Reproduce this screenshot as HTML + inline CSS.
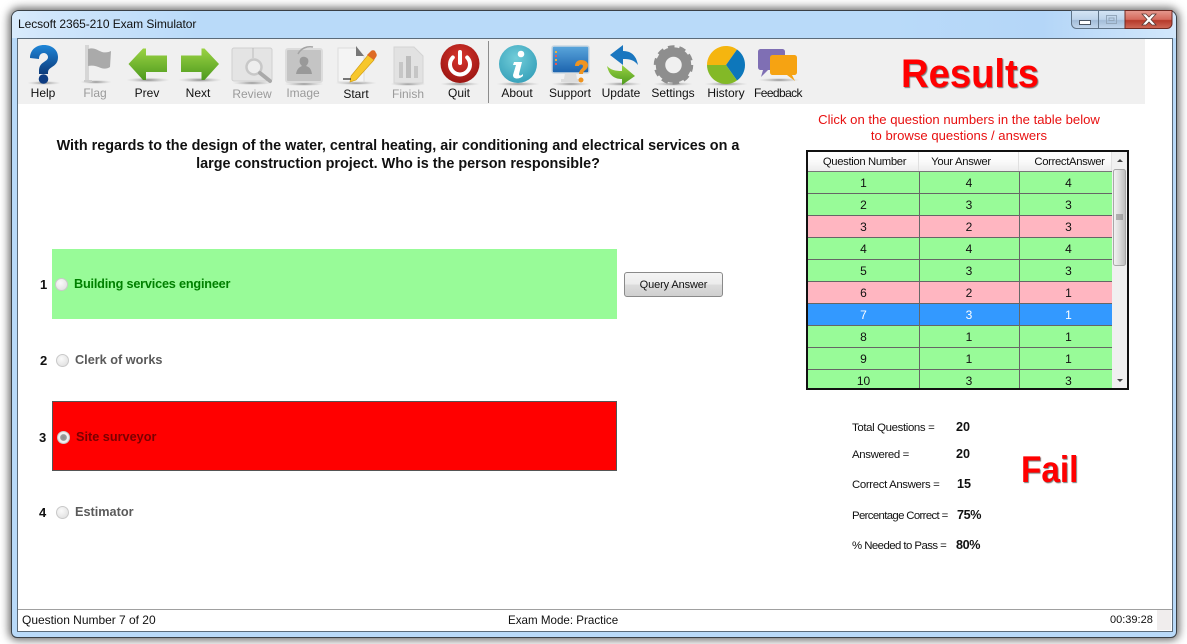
<!DOCTYPE html>
<html><head><meta charset="utf-8"><title>Lecsoft 2365-210 Exam Simulator</title>
<style>
html,body{margin:0;padding:0;background:#fff}
body{width:1187px;height:644px;position:relative;overflow:hidden;font-family:"Liberation Sans",sans-serif;color:#111;font-size:12px}
.a{position:absolute;white-space:nowrap}
#win{position:absolute;left:11px;top:10px;width:1166px;height:628px;border-radius:8px 8px 6px 6px;background:#b9daf9;box-shadow:0 0 9px 2px rgba(0,0,0,.62);border:1px solid #3a4046;box-sizing:border-box}
#glow{position:absolute;left:12px;top:11px;width:1164px;height:27px;border-radius:7px 7px 0 0;background:linear-gradient(90deg,#d9ebfc 0,#cfe5fb 40px,#b9daf9 190px,#b9daf9 880px,#b4d6f8 1030px,#d2e7fb 1164px)}
#client{position:absolute;left:17px;top:38px;width:1156px;height:594px;background:#fff;border:1px solid #5b6b7a;box-sizing:border-box}
#tb{position:absolute;left:18px;top:39px;width:1127px;height:65px;background:#f0f0f0}
.l{position:absolute;top:86px;width:70px;text-align:center;font-size:12px;color:#111}
.d{color:#9a9a9a}
.q{position:absolute;left:40px;width:716px;text-align:center;font-weight:bold;font-size:14.4px;color:#111;white-space:nowrap}
.opt{position:absolute;left:52px;width:565px;height:70px;box-sizing:border-box}
.n{position:absolute;font-weight:bold;font-size:13px;color:#111}
.t{position:absolute;font-weight:bold;font-size:12.7px;white-space:nowrap;line-height:15px}
.r{position:absolute;width:11px;height:11px;border-radius:50%;border:1px solid #c9c9c9;background:radial-gradient(circle at 40% 35%,#fafafa,#dcdcdc);box-sizing:content-box}
#btn{position:absolute;left:624px;top:272px;width:99px;height:25px;box-sizing:border-box;border:1px solid #8a8a8a;border-radius:3px;background:linear-gradient(#f4f4f4 0,#ececec 48%,#dcdcdc 52%,#cfcfcf 100%);text-align:center;line-height:24px;font-size:11px;letter-spacing:-.12px}
#grid{position:absolute;left:806px;top:150px;width:323px;height:240px;box-sizing:border-box;border:2px solid #111;background:#f0f0f0;overflow:hidden}
.hc{position:absolute;top:0;height:19px;line-height:20px;text-align:center;font-size:11.3px;letter-spacing:-.25px;background:linear-gradient(#fff 0,#fafafa 50%,#ececec 100%);border-right:1px solid #e0e0e0;box-sizing:border-box}
.row{position:absolute;left:0;width:304px;height:22px;border-bottom:1px solid #666;box-sizing:border-box;border-top:0}
.row span{position:absolute;top:4px;text-align:center;font-size:12px}
.row i{position:absolute;top:0;bottom:-1px;width:1px;background:#666}
.g{background:#98fb98}.p{background:#ffb6c1}.b{background:#3399ff;color:#fff}
.sl{position:absolute;left:852px;font-size:11.4px;letter-spacing:-.35px;white-space:nowrap}
.sv{position:absolute;font-size:12.6px;font-weight:bold;white-space:nowrap}
</style></head><body>
<div id="win"></div><div id="glow"></div>
<div class="a" style="left:18px;top:17px;font-size:12px;letter-spacing:-.08px;color:#111">Lecsoft 2365-210 Exam Simulator</div>

<svg class="a" style="left:1070px;top:10px" width="104" height="20" viewBox="0 0 104 20">
<defs>
<linearGradient id="wb" x1="0" y1="0" x2="0" y2="1"><stop offset="0" stop-color="#d4e5f5"/><stop offset=".5" stop-color="#bcd3ea"/><stop offset=".55" stop-color="#a3bdd8"/><stop offset="1" stop-color="#c3d8ee"/></linearGradient>
<linearGradient id="wr" x1="0" y1="0" x2="0" y2="1"><stop offset="0" stop-color="#e59a8f"/><stop offset=".5" stop-color="#d56a5c"/><stop offset=".55" stop-color="#b63a2a"/><stop offset="1" stop-color="#cf6a58"/></linearGradient>
</defs>
<path d="M1.5 0.5H55V18.5H6.5a5 5 0 0 1-5-5z" fill="url(#wb)" stroke="#5f7488"/>
<path d="M55 0.5H102V13.500a5 5 0 0 1-5 5H55z" fill="url(#wr)" stroke="#6e2a22"/>
<path d="M28.500 1V18" stroke="#5f7488"/>
<rect x="9.500" y="10.500" width="11" height="4" fill="#fff" stroke="#4a5563"/>
<rect x="36.500" y="5.500" width="10" height="8" fill="none" stroke="#93a7bb"/><rect x="39" y="8" width="5" height="2.500" fill="none" stroke="#93a7bb"/>
<path d="M72 4l4 0 3 3 3-3 4 0-5 5.500 5 5.500h-4l-3-3-3 3h-4l5-5.500z" fill="#fff" stroke="#5a3a36" stroke-width=".8"/>
</svg>

<div id="client"></div>
<div id="tb"></div>
<div class="a" style="left:488px;top:41px;width:1px;height:62px;background:#8c8c8c"></div>

<svg class="a" style="left:0;top:0" width="830" height="104" viewBox="0 0 830 104">
<defs>
<radialGradient id="sh"><stop offset="0" stop-color="#8a8a8a"/><stop offset="1" stop-color="#bbb" stop-opacity="0"/></radialGradient>
<linearGradient id="gr" x1="0" y1="0" x2="0" y2="1"><stop offset="0" stop-color="#9ad243"/><stop offset="1" stop-color="#4d9a1e"/></linearGradient>
<linearGradient id="bq" x1="0" y1="0" x2="0" y2="1"><stop offset="0" stop-color="#1f86d8"/><stop offset="1" stop-color="#0b3a7a"/></linearGradient>
<radialGradient id="rq" cx=".5" cy=".35" r=".7"><stop offset="0" stop-color="#d9352d"/><stop offset="1" stop-color="#971310"/></radialGradient>
<radialGradient id="tq" cx=".45" cy=".35" r=".7"><stop offset="0" stop-color="#72cdd9"/><stop offset="1" stop-color="#349fb9"/></radialGradient>
<linearGradient id="mon" x1="0" y1="0" x2="0" y2="1"><stop offset="0" stop-color="#5aa6dc"/><stop offset="1" stop-color="#1b62ad"/></linearGradient>
</defs>
<g fill="url(#sh)">
<ellipse cx="44" cy="83" rx="17" ry="2"/><ellipse cx="96" cy="82" rx="16" ry="2"/><ellipse cx="148" cy="80" rx="22" ry="2.500"/><ellipse cx="200" cy="80" rx="22" ry="2.500"/>
<ellipse cx="252" cy="83" rx="20" ry="2"/><ellipse cx="304" cy="84" rx="20" ry="2"/><ellipse cx="356" cy="83" rx="21" ry="2"/><ellipse cx="408" cy="84" rx="18" ry="2"/>
<ellipse cx="460" cy="84" rx="20" ry="2"/><ellipse cx="518" cy="84" rx="22" ry="2"/><ellipse cx="571" cy="84" rx="20" ry="2"/><ellipse cx="622" cy="84" rx="20" ry="2"/><ellipse cx="673" cy="84" rx="20" ry="2"/><ellipse cx="726" cy="84" rx="22" ry="2"/><ellipse cx="779" cy="80" rx="21" ry="2"/>
</g>
<!-- Help -->
<path d="M30 58c0-8 6-13 14-13 8 0 14 5 14 12 0 6-3 8-6 10-3 2-4 3-4 6v1h-9v-3c0-5 2-7 5-9 3-2 4-3 4-5 0-2-2-4-4-4-3 0-5 2-5 6z" fill="url(#bq)"/>
<circle cx="43.500" cy="79" r="4.800" fill="#0d3c82"/>
<!-- Flag -->
<rect x="85" y="45" width="4" height="36" fill="#d6d6d6"/><rect x="84" y="80" width="8" height="2" fill="#ccc"/>
<path d="M88 49c6-2 9 1 14 3 4 1 7 0 9-1l-1 16c-3 2-6 2-9 1-5-2-8-3-13-2z" fill="#aaa"/>
<!-- Prev / Next -->
<path d="M128.500 64L143 48.500h3V55.500h21V72h-21v8h-3z" fill="url(#gr)"/>
<path d="M219 64L204.500 48.500h-3V55.500H181V72h20.500v8h3z" fill="url(#gr)"/>
<!-- Review -->
<rect x="232" y="48" width="40" height="33" rx="2" fill="#e4e4e4" stroke="#cfcfcf"/><path d="M253 48v10" stroke="#bbb"/>
<circle cx="254" cy="67" r="7.500" fill="#eee" stroke="#c8c8c8" stroke-width="2.500"/><path d="M260 73l10 8" stroke="#aaa" stroke-width="4" stroke-linecap="round"/>
<!-- Image -->
<rect x="286" y="49" width="36" height="33" rx="2" fill="#c4c4c4" stroke="#dcdcdc" stroke-width="2"/>
<path d="M296 74c1-6 4-7 6-8-2-2-3-4-2-7 1-3 6-3 8 0 1 3 0 5-2 7 3 1 5 2 6 8z" fill="#999"/>
<path d="M298 54c3-6 9-8 15-7" fill="none" stroke="#a4a4a4" stroke-width="1.500"/>
<!-- Start -->
<path d="M338 48h18l8 8v26h-26z" fill="#f4f4f4" stroke="#ddd"/><path d="M356 46l8 10h-8z" fill="#777"/>
<path d="M351 76l17-21 6 5-18 20-6 2z" fill="#f7c72c" stroke="#cf9a14" stroke-width=".6"/><path d="M367 55l4-4c1-1 3-1 4 0l1 2c1 1 1 3 0 4l-2 3z" fill="#de6a25"/><path d="M343 79h8" stroke="#333" stroke-width="1.300"/>
<!-- Finish -->
<path d="M394 47h20l9 9v27h-29z" fill="#e2e2e2" stroke="#d4d4d4"/><rect x="399" y="62" width="4" height="16" fill="#c6c6c6"/><rect x="406" y="56" width="5" height="22" fill="#bdbdbd"/><rect x="414" y="66" width="4" height="12" fill="#c6c6c6"/>
<!-- Quit -->
<circle cx="460" cy="63.500" r="19.500" fill="url(#rq)"/>
<path d="M452.800 57.500a10 10 0 1 0 14.400 0" fill="none" stroke="#fff" stroke-width="4" stroke-linecap="round"/><path d="M460 52v11" stroke="#fff" stroke-width="4" stroke-linecap="round"/>
<!-- About -->
<circle cx="518" cy="64" r="19" fill="url(#tq)"/>
<circle cx="521" cy="54" r="3.300" fill="#fff"/><path d="M514 62h8l-3 12c0 2 2 2 4 0v2c-3 3-10 4-10-1l3-10h-3z" fill="#fff"/>
<!-- Support -->
<rect x="552" y="46" width="37" height="27" rx="2" fill="url(#mon)" stroke="#c9d7e2" stroke-width="1.500"/>
<g fill="#e8b340"><rect x="555" y="51" width="2" height="2"/><rect x="555" y="55" width="2" height="2" fill="#e55"/><rect x="555" y="59" width="2" height="2"/><rect x="555" y="63" width="2" height="2" fill="#e55"/></g>
<path d="M565 73h11l1 6h3v3h-19v-3h3z" fill="#dcdcdc"/>
<path d="M575 66c0-4 3-6 6-6 4 0 7 2 7 5 0 5-5 5-5 9h-4c0-5 4-5 4-8 0-2-4-2-4 0z" fill="#f0941f"/><circle cx="581" cy="80" r="2.500" fill="#f0941f"/>
<!-- Update -->
<path d="M610 55l13-10v6c8 0 13 4 15 14-4-5-8-6-15-6v6z" fill="#1a76bf"/>
<path d="M607 66c4 4 8 5 15 5v-6l13 11-13 9v-6c-8 0-13-4-15-13z" fill="url(#gr)"/>
<!-- Settings -->
<circle cx="673.500" cy="65" r="13" fill="none" stroke="#8e8e8e" stroke-width="9.500"/>
<circle cx="673.500" cy="65" r="17.500" fill="none" stroke="#8e8e8e" stroke-width="4.500" stroke-dasharray="6.300 4.700"/>
<!-- History -->
<path d="M726 65L707 65A19 19 0 0 1 737 49.500z" fill="#f5b50f"/>
<path d="M726 65L737 49.500A19 19 0 0 1 737 80.500z" fill="#0d77bb"/>
<path d="M726 65L737 80.500A19 19 0 0 1 707 65z" fill="#83b927"/>
<!-- Feedback -->
<path d="M761 49h21c2 0 3 1 3 3v15c0 2-1 3-3 3h-14l-7 7 2-7h-2c-2 0-3-1-3-3V52c0-2 1-3 3-3z" fill="#7f6fb4"/>
<path d="M773 55h21c2 0 3 1 3 3v14c0 2-1 3-3 3h-2l3 6-8-6h-14c-2 0-3-1-3-3V58c0-2 1-3 3-3z" fill="#f6a312"/>
</svg>

<div class="l" style="left:8px">Help</div><div class="l d" style="left:60px">Flag</div><div class="l" style="left:112px">Prev</div><div class="l" style="left:163px">Next</div>
<div class="l d" style="left:217px;top:87px">Review</div><div class="l d" style="left:268px">Image</div><div class="l" style="left:321px;top:87px">Start</div><div class="l d" style="left:373px;top:87px">Finish</div>
<div class="l" style="left:424px">Quit</div><div class="l" style="left:482px">About</div><div class="l" style="left:535px">Support</div><div class="l" style="left:586px">Update</div><div class="l" style="left:638px">Settings</div><div class="l" style="left:691px">History</div><div class="l" style="left:743px;letter-spacing:-.6px">Feedback</div>

<div class="a" style="left:901px;top:52px;font-size:40px;font-weight:bold;color:#f00;text-shadow:1px 1px 1px #777;transform:scaleX(.955);transform-origin:0 0">Results</div>

<div class="a" style="left:760px;width:398px;top:112px;text-align:center;font-size:13.1px;color:#e81010">Click on the question numbers in the table below</div>
<div class="a" style="left:760px;width:398px;top:128px;text-align:center;font-size:13.1px;color:#e81010">to browse questions / answers</div>

<div class="q" style="top:138px">With regards to the design of the water, central heating, air conditioning and electrical services on a</div>
<div class="q" style="top:156px">large construction project. Who is the person responsible?</div>

<div class="opt" style="top:249px;background:#98fb98"></div>
<div class="opt" style="top:401px;background:#f00;border:1px solid #555"></div>
<div class="n" style="left:40px;top:277px">1</div><div class="r" style="left:55px;top:278px"></div><div class="t" style="left:74px;top:277px;color:#008000;letter-spacing:-.2px">Building services engineer</div>
<div class="n" style="left:40px;top:353px">2</div><div class="r" style="left:56px;top:354px"></div><div class="t" style="left:75px;top:353px;color:#5a5a5a">Clerk of works</div>
<div class="n" style="left:39px;top:430px">3</div><div class="r" style="left:57px;top:431px;background:radial-gradient(circle,#8c8c8c 0,#9a9a9a 38%,#f2f2f2 48%,#e4e4e4 100%)"></div><div class="t" style="left:76px;top:430px;color:#7a0000">Site surveyor</div>
<div class="n" style="left:39px;top:505px">4</div><div class="r" style="left:56px;top:506px"></div><div class="t" style="left:75px;top:505px;color:#5a5a5a">Estimator</div>

<div id="btn">Query Answer</div>

<div id="grid">
<div class="hc" style="left:0;width:111px;padding-left:3px;letter-spacing:-.35px">Question Number</div><div class="hc" style="left:111px;width:100px;padding-right:15px;letter-spacing:-.3px">Your Answer</div><div class="hc" style="left:211px;width:93px;padding-left:9px;letter-spacing:-.35px">CorrectAnswer</div>
<div style="position:absolute;left:0;top:19px;width:304px;height:1px;background:#777"></div>
<div class="row g" style="top:20px"><i style="left:111px"></i><i style="left:211px"></i><span style="left:0;width:111px">1</span><span style="left:111px;width:100px">4</span><span style="left:212px;width:97px">4</span></div>
<div class="row g" style="top:42px"><i style="left:111px"></i><i style="left:211px"></i><span style="left:0;width:111px">2</span><span style="left:111px;width:100px">3</span><span style="left:212px;width:97px">3</span></div>
<div class="row p" style="top:64px"><i style="left:111px"></i><i style="left:211px"></i><span style="left:0;width:111px">3</span><span style="left:111px;width:100px">2</span><span style="left:212px;width:97px">3</span></div>
<div class="row g" style="top:86px"><i style="left:111px"></i><i style="left:211px"></i><span style="left:0;width:111px">4</span><span style="left:111px;width:100px">4</span><span style="left:212px;width:97px">4</span></div>
<div class="row g" style="top:108px"><i style="left:111px"></i><i style="left:211px"></i><span style="left:0;width:111px">5</span><span style="left:111px;width:100px">3</span><span style="left:212px;width:97px">3</span></div>
<div class="row p" style="top:130px"><i style="left:111px"></i><i style="left:211px"></i><span style="left:0;width:111px">6</span><span style="left:111px;width:100px">2</span><span style="left:212px;width:97px">1</span></div>
<div class="row b" style="top:152px"><i style="left:111px"></i><i style="left:211px"></i><span style="left:0;width:111px">7</span><span style="left:111px;width:100px">3</span><span style="left:212px;width:97px">1</span></div>
<div class="row g" style="top:174px"><i style="left:111px"></i><i style="left:211px"></i><span style="left:0;width:111px">8</span><span style="left:111px;width:100px">1</span><span style="left:212px;width:97px">1</span></div>
<div class="row g" style="top:196px"><i style="left:111px"></i><i style="left:211px"></i><span style="left:0;width:111px">9</span><span style="left:111px;width:100px">1</span><span style="left:212px;width:97px">1</span></div>
<div class="row g" style="top:218px;border-bottom:0"><i style="left:111px"></i><i style="left:211px"></i><span style="left:0;width:111px">10</span><span style="left:111px;width:100px">3</span><span style="left:212px;width:97px">3</span></div>
<svg style="position:absolute;left:304px;top:0" width="15" height="236" viewBox="0 0 15 236">
<defs><linearGradient id="sc" x1="0" y1="0" x2="1" y2="0"><stop offset="0" stop-color="#f4f4f4"/><stop offset=".5" stop-color="#dcdcdc"/><stop offset="1" stop-color="#bcbcbc"/></linearGradient></defs>
<rect x="0" y="0" width="15" height="236" fill="#f0f0f0"/>
<path d="M5 10l3-3 3 3z" fill="#444"/>
<rect x="1.500" y="17.500" width="12" height="96" rx="2" fill="url(#sc)" stroke="#a8a8a8"/>
<path d="M4 63h7M4 65h7M4 67h7" stroke="#777"/>
<path d="M5 227l3 3 3-3z" fill="#444"/>
</svg>
</div>

<div class="sl" style="top:422px">Total Questions =</div><div class="sv" style="left:956px;top:420px">20</div>
<div class="sl" style="top:449px">Answered =</div><div class="sv" style="left:956px;top:447px">20</div>
<div class="sl" style="top:479px">Correct Answers =</div><div class="sv" style="left:957px;top:477px">15</div>
<div class="sl" style="top:510px;letter-spacing:-.65px">Percentage Correct =</div><div class="sv" style="left:957px;top:508px;letter-spacing:-.4px">75%</div>
<div class="sl" style="top:540px;letter-spacing:-.55px">% Needed to Pass =</div><div class="sv" style="left:956px;top:538px;letter-spacing:-.4px">80%</div>

<div class="a" style="left:1021px;top:449px;font-size:37px;font-weight:bold;color:#f00;text-shadow:1px 1px 1px #777;transform:scaleX(.9);transform-origin:0 0">Fail</div>

<div class="a" style="left:18px;top:609px;width:1154px;height:1px;background:#a0a0a0"></div>
<div class="a" style="left:22px;top:613px;letter-spacing:-.02px">Question Number 7 of 20</div>
<div class="a" style="left:508px;top:614px;font-size:11.6px">Exam Mode: Practice</div>
<div class="a" style="left:1110px;top:614px;font-size:11px">00:39:28</div>
<div class="a" style="left:1157px;top:610px;width:14px;height:20px;background:#f0eded"></div>
</body></html>
